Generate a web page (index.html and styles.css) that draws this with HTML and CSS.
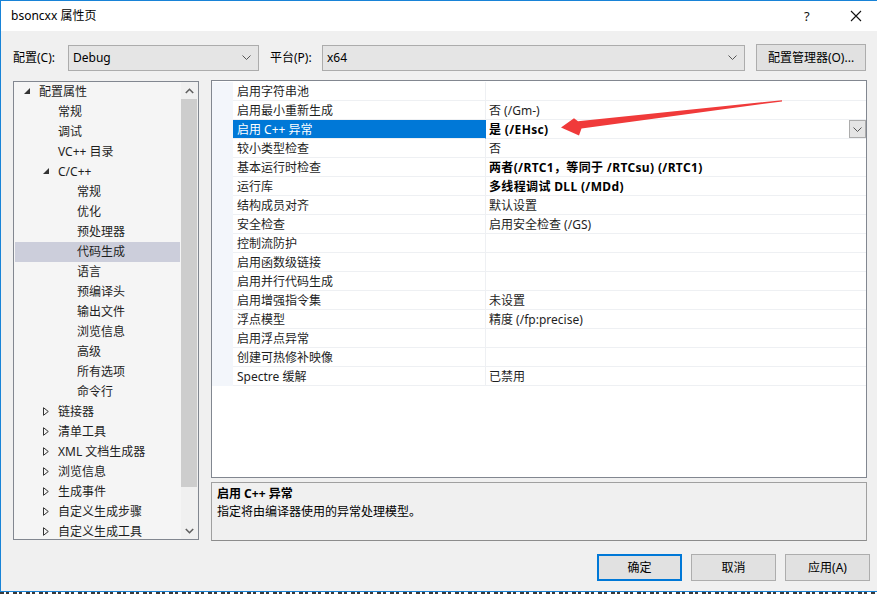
FILE: index.html
```html
<!DOCTYPE html>
<html lang="zh-CN">
<head>
<meta charset="utf-8">
<title>bsoncxx 属性页</title>
<link rel="stylesheet" href="styles.css">
</head>
<body>
<div class="window">
  <div class="titlebar">
    <span class="title">bsoncxx 属性页</span>
    <span class="help">?</span>
    <span class="close"><svg width="12" height="12" viewBox="0 0 12 12"><path d="M1 1L11 11M11 1L1 11" stroke="#111" stroke-width="1.1" fill="none"/></svg></span>
  </div>
  <div class="content">
    <div class="toolbar">
      <span class="lbl lbl-config">配置(C):</span>
      <div class="combo combo-config"><span class="combo-text">Debug</span><svg class="chev" width="9" height="5" viewBox="0 0 9 5"><path d="M0.5 0.5L4.5 4.5L8.5 0.5" stroke="#555" stroke-width="1" fill="none"/></svg></div>
      <span class="lbl lbl-platform">平台(P):</span>
      <div class="combo combo-platform"><span class="combo-text">x64</span><svg class="chev" width="9" height="5" viewBox="0 0 9 5"><path d="M0.5 0.5L4.5 4.5L8.5 0.5" stroke="#555" stroke-width="1" fill="none"/></svg></div>
      <div class="btn btn-mgr">配置管理器(O)...</div>
    </div>

    <div class="main">
      <div class="tree">
        <div class="tree-list">
          <div class="trow l0"><span class="exp"><svg width="6" height="6" viewBox="0 0 6 6"><path d="M6 0L6 6L0 6Z" fill="#333"/></svg></span><span>配置属性</span></div>
          <div class="trow l1"><span class="exp"></span><span>常规</span></div>
          <div class="trow l1"><span class="exp"></span><span>调试</span></div>
          <div class="trow l1"><span class="exp"></span><span>VC++ 目录</span></div>
          <div class="trow l1"><span class="exp"><svg width="6" height="6" viewBox="0 0 6 6"><path d="M6 0L6 6L0 6Z" fill="#333"/></svg></span><span>C/C++</span></div>
          <div class="trow l2"><span class="exp"></span><span>常规</span></div>
          <div class="trow l2"><span class="exp"></span><span>优化</span></div>
          <div class="trow l2"><span class="exp"></span><span>预处理器</span></div>
          <div class="trow l2 sel"><span class="exp"></span><span>代码生成</span></div>
          <div class="trow l2"><span class="exp"></span><span>语言</span></div>
          <div class="trow l2"><span class="exp"></span><span>预编译头</span></div>
          <div class="trow l2"><span class="exp"></span><span>输出文件</span></div>
          <div class="trow l2"><span class="exp"></span><span>浏览信息</span></div>
          <div class="trow l2"><span class="exp"></span><span>高级</span></div>
          <div class="trow l2"><span class="exp"></span><span>所有选项</span></div>
          <div class="trow l2"><span class="exp"></span><span>命令行</span></div>
          <div class="trow l1"><span class="exp"><svg width="6" height="9" viewBox="0 0 6 9"><path d="M0.5 0.7L5.3 4.5L0.5 8.3Z" fill="none" stroke="#333" stroke-width="1"/></svg></span><span>链接器</span></div>
          <div class="trow l1"><span class="exp"><svg width="6" height="9" viewBox="0 0 6 9"><path d="M0.5 0.7L5.3 4.5L0.5 8.3Z" fill="none" stroke="#333" stroke-width="1"/></svg></span><span>清单工具</span></div>
          <div class="trow l1"><span class="exp"><svg width="6" height="9" viewBox="0 0 6 9"><path d="M0.5 0.7L5.3 4.5L0.5 8.3Z" fill="none" stroke="#333" stroke-width="1"/></svg></span><span>XML 文档生成器</span></div>
          <div class="trow l1"><span class="exp"><svg width="6" height="9" viewBox="0 0 6 9"><path d="M0.5 0.7L5.3 4.5L0.5 8.3Z" fill="none" stroke="#333" stroke-width="1"/></svg></span><span>浏览信息</span></div>
          <div class="trow l1"><span class="exp"><svg width="6" height="9" viewBox="0 0 6 9"><path d="M0.5 0.7L5.3 4.5L0.5 8.3Z" fill="none" stroke="#333" stroke-width="1"/></svg></span><span>生成事件</span></div>
          <div class="trow l1"><span class="exp"><svg width="6" height="9" viewBox="0 0 6 9"><path d="M0.5 0.7L5.3 4.5L0.5 8.3Z" fill="none" stroke="#333" stroke-width="1"/></svg></span><span>自定义生成步骤</span></div>
          <div class="trow l1"><span class="exp"><svg width="6" height="9" viewBox="0 0 6 9"><path d="M0.5 0.7L5.3 4.5L0.5 8.3Z" fill="none" stroke="#333" stroke-width="1"/></svg></span><span>自定义生成工具</span></div>
        </div>
        <div class="vscroll">
          <div class="sb-btn"><svg width="9" height="6" viewBox="0 0 9 6"><path d="M0.8 5L4.5 1.3L8.2 5" stroke="#606060" stroke-width="1.6" fill="none"/></svg></div>
          <div class="sb-thumb"></div>
          <div class="sb-track"></div>
          <div class="sb-btn"><svg width="9" height="6" viewBox="0 0 9 6"><path d="M0.8 1L4.5 4.7L8.2 1" stroke="#606060" stroke-width="1.6" fill="none"/></svg></div>
        </div>
      </div>

      <div class="right">
        <div class="grid">
          <div class="grow"><span class="gm"></span><span class="gn">启用字符串池</span><span class="gv"></span></div>
          <div class="grow"><span class="gm"></span><span class="gn">启用最小重新生成</span><span class="gv">否 (/Gm-)</span></div>
          <div class="grow gsel"><span class="gm"></span><span class="gn">启用 C++ 异常</span><span class="gv"><span class="gv-text b">是 (/EHsc)</span><span class="gdrop"><svg width="9" height="5" viewBox="0 0 9 5"><path d="M0.5 0.5L4.5 4.5L8.5 0.5" stroke="#555" stroke-width="1" fill="none"/></svg></span></span></div>
          <div class="grow"><span class="gm"></span><span class="gn">较小类型检查</span><span class="gv">否</span></div>
          <div class="grow"><span class="gm"></span><span class="gn">基本运行时检查</span><span class="gv b">两者(/RTC1，等同于 /RTCsu) (/RTC1)</span></div>
          <div class="grow"><span class="gm"></span><span class="gn">运行库</span><span class="gv b">多线程调试 DLL (/MDd)</span></div>
          <div class="grow"><span class="gm"></span><span class="gn">结构成员对齐</span><span class="gv">默认设置</span></div>
          <div class="grow"><span class="gm"></span><span class="gn">安全检查</span><span class="gv">启用安全检查 (/GS)</span></div>
          <div class="grow"><span class="gm"></span><span class="gn">控制流防护</span><span class="gv"></span></div>
          <div class="grow"><span class="gm"></span><span class="gn">启用函数级链接</span><span class="gv"></span></div>
          <div class="grow"><span class="gm"></span><span class="gn">启用并行代码生成</span><span class="gv"></span></div>
          <div class="grow"><span class="gm"></span><span class="gn">启用增强指令集</span><span class="gv">未设置</span></div>
          <div class="grow"><span class="gm"></span><span class="gn">浮点模型</span><span class="gv">精度 (/fp:precise)</span></div>
          <div class="grow"><span class="gm"></span><span class="gn">启用浮点异常</span><span class="gv"></span></div>
          <div class="grow"><span class="gm"></span><span class="gn">创建可热修补映像</span><span class="gv"></span></div>
          <div class="grow"><span class="gm"></span><span class="gn">Spectre 缓解</span><span class="gv">已禁用</span></div>
        </div>
        <div class="desc">
          <div class="desc-title">启用 C++ 异常</div>
          <div class="desc-text">指定将由编译器使用的异常处理模型。</div>
        </div>
      </div>
    </div>

    <div class="buttons">
      <div class="btn btn-ok">确定</div>
      <div class="btn btn-cancel">取消</div>
      <div class="btn btn-apply">应用(A)</div>
    </div>
  </div>

  <svg class="arrow" width="877" height="594" viewBox="0 0 877 594">
    <path d="M561 127.5L574 118.3L578 121.3L782 100.2L782 101.4L581.5 128.6L579 135.5Z" fill="#f03a3a"/>
  </svg>
</div>
<div class="under"></div>
</body>
</html>
```

FILE: styles.css
```css
* { box-sizing: border-box; }

html, body {
  margin: 0;
  padding: 0;
}

body {
  width: 877px;
  height: 594px;
  overflow: hidden;
  background: #ffffff;
  font-family: "Noto Sans", "Noto Sans CJK SC", sans-serif;
  font-size: 12px;
  color: #1a1a1a;
}

.window {
  position: relative;
  width: 877px;
  height: 592px;
  border-top: 1px solid #1883d7;
  border-left: 1px solid #1883d7;
  border-bottom: 1px solid #1883d7;
  display: flex;
  flex-direction: column;
}

.titlebar {
  height: 30px;
  background: #ffffff;
  display: flex;
  align-items: center;
  padding-left: 10px;
  flex-shrink: 0;
}

.title {
  flex: 1;
  line-height: 18px;
  color: #000;
}

.help {
  width: 14px;
  margin-right: 32px;
  font-size: 13px;
  color: #111;
  line-height: 18px;
}

.close {
  width: 12px;
  height: 12px;
  margin-right: 15px;
  display: flex;
}

.content {
  flex: 1;
  background: #f0f0f0;
  padding: 13px 6px 10px 12px;
  display: flex;
  flex-direction: column;
}

.toolbar {
  height: 27px;
  display: flex;
  align-items: center;
}

.lbl {
  line-height: 18px;
  color: #000;
}

.lbl-config { width: 55px; }
.lbl-platform { width: 52px; margin-left: 11px; }

.combo {
  height: 26px;
  background: #e5e5e5;
  border: 1px solid #acacac;
  display: flex;
  align-items: center;
  padding: 0 7px 0 4px;
}

.combo-config { width: 191px; }
.combo-platform { width: 423px; }

.combo-text {
  flex: 1;
  line-height: 18px;
  color: #000;
}

.chev { display: block; }

.btn {
  background: #e1e1e1;
  border: 1px solid #adadad;
  display: flex;
  align-items: center;
  justify-content: center;
  line-height: 18px;
  color: #000;
}

.btn-mgr {
  width: 110px;
  height: 27px;
  margin-left: 11px;
}

.main {
  margin-top: 9px;
  height: 461px;
  display: flex;
  gap: 12px;
}

.tree {
  margin-top: 1px;
  width: 186px;
  height: 459px;
  border: 1px solid #828790;
  background: #f5f5f5;
  display: flex;
}

.tree-list {
  flex: 1;
  padding: 0 1px;
  overflow: hidden;
}

.trow {
  height: 20px;
  display: flex;
  align-items: center;
  line-height: 18px;
  white-space: nowrap;
  color: #1e1e1e;
}

.trow.l0 { padding-left: 4px; }
.trow.l1 { padding-left: 23px; }
.trow.l2 { padding-left: 42px; }

.trow.sel { background: #cccedb; }

.exp {
  width: 20px;
  height: 20px;
  display: flex;
  align-items: center;
  padding-left: 5px;
  flex-shrink: 0;
}

.exp svg { display: block; margin-top: -2px; }

.vscroll {
  width: 17px;
  background: #f0f0f0;
  display: flex;
  flex-direction: column;
}

.sb-btn {
  height: 17px;
  display: flex;
  align-items: center;
  justify-content: center;
}

.sb-thumb {
  height: 388px;
  margin: 0 1px 0 0;
  background: #cdcdcd;
}

.sb-track { flex: 1; }

.right {
  width: 656px;
  display: flex;
  flex-direction: column;
  gap: 4px;
}

.grid {
  height: 398px;
  border: 1px solid #828790;
  background: #ffffff;
  padding-top: 1px;
}

.grow {
  height: 19px;
  display: flex;
}

.gm {
  width: 21px;
  background: #f3f6fb;
  flex-shrink: 0;
}

.gn {
  width: 253px;
  flex-shrink: 0;
  padding-left: 4px;
  border-right: 1px solid #eef0f3;
  border-bottom: 1px solid #eef0f3;
  line-height: 19px;
  white-space: nowrap;
  color: #1e1e1e;
}

.gv {
  flex: 1;
  padding-left: 3px;
  border-bottom: 1px solid #eef0f3;
  line-height: 19px;
  white-space: nowrap;
  display: flex;
  color: #1e1e1e;
}

.b { font-weight: bold; color: #000; letter-spacing: 0.35px; }

.gsel .gn {
  background: #0078d7;
  color: #ffffff;
  border-right-color: #0078d7;
}

.gv-text { flex: 1; }

.gdrop {
  width: 17px;
  height: 18px;
  background: #e5e5e5;
  border: 1px solid #acacac;
  display: flex;
  align-items: center;
  justify-content: center;
}

.desc {
  height: 59px;
  border: 1px solid #a0a0a0;
  border-bottom-color: #8c8c8c;
  background: #f0f0f0;
  padding: 2px 5px;
}

.desc-title {
  font-weight: bold;
  line-height: 18px;
  color: #000;
}

.desc-text {
  line-height: 18px;
  color: #000;
}

.buttons {
  margin-top: 13px;
  height: 27px;
  display: flex;
  justify-content: flex-end;
  gap: 9px;
  margin-right: 1px;
}

.buttons .btn {
  width: 85px;
  height: 27px;
}

.btn-ok {
  border: 2px solid #0078d7;
}

.arrow {
  position: absolute;
  left: -1px;
  top: -1px;
  pointer-events: none;
}

.under {
  height: 2px;
  background: repeating-linear-gradient(90deg, #3a3a3a 0 4px, #ffffff 4px 6px, #3a3a3a 6px 9px, #ffffff 9px 13px);
}
```
